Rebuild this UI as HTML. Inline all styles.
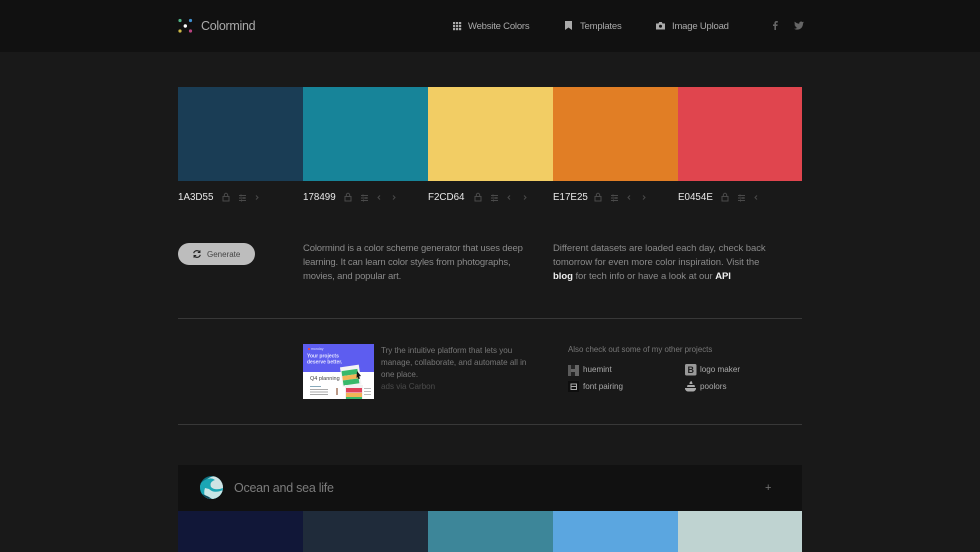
<!DOCTYPE html>
<html><head><meta charset="utf-8"><style>
html,body{margin:0;padding:0;background:#191919;width:980px;height:552px;overflow:hidden}
body{position:relative;font-family:"Liberation Sans",sans-serif;color:#8c8c8c}
.a{position:absolute;white-space:nowrap}
.s{position:absolute}
.t{font-size:9.500px;line-height:14px;color:#8a8a8a;letter-spacing:-.16px}
.n{font-size:9.500px;line-height:14px;color:#aaa;letter-spacing:-.2px}
.h{font-size:9.800px;line-height:14px;color:#fff;top:191px;opacity:.9}
.p{font-size:8.050px;line-height:12.400px;color:#777}
.l{font-size:8.100px;line-height:12px;color:#aaa}
svg{position:absolute;overflow:visible}
b{color:#eee;font-weight:700}
</style></head><body>
<div class="s" style="left:0;top:0;width:980px;height:52px;background:#111"></div>

<svg style="left:178px;top:18px" width="15" height="16">
<circle cx="7.300" cy="8" r="1.700" fill="#fff"/><circle cx="2" cy="2.500" r="1.600" fill="#4fb286"/><circle cx="12.500" cy="2.500" r="1.600" fill="#3f8fd0"/><circle cx="2" cy="13" r="1.600" fill="#cdb845"/><circle cx="12.500" cy="13" r="1.600" fill="#b8427f"/></svg>
<div class="a" style="left:201px;top:18px;font-size:12.500px;line-height:16px;color:#aaa;letter-spacing:-.3px">Colormind</div>

<svg style="left:453px;top:22px" width="8" height="8" fill="#aaa"><rect width="2.200" height="2.200"/><rect x="3" width="2.200" height="2.200"/><rect x="6" width="2.200" height="2.200"/><rect y="3" width="2.200" height="2.200"/><rect x="3" y="3" width="2.200" height="2.200"/><rect x="6" y="3" width="2.200" height="2.200"/><rect y="6" width="2.200" height="2.200"/><rect x="3" y="6" width="2.200" height="2.200"/><rect x="6" y="6" width="2.200" height="2.200"/></svg>
<div class="a n" style="left:468px;top:20px">Website Colors</div>
<svg style="left:565px;top:21px" width="7" height="9" fill="#aaa"><path d="M0 0H7V9L3.500 6.500L0 9Z"/></svg>
<div class="a n" style="left:580px;top:20px">Templates</div>
<svg style="left:656px;top:22px" width="9" height="8"><path d="M0 1.500H2.500L3.200 0H5.800L6.500 1.500H9V7.500H0Z" fill="#aaa"/><circle cx="4.500" cy="4.300" r="1.500" fill="#111"/></svg>
<div class="a n" style="left:672px;top:20px">Image Upload</div>
<svg style="left:773px;top:21px" width="5" height="9" fill="#666"><path d="M1.400 9V5H0V3.400H1.400V2.200C1.400.8 2.200 0 3.500 0H4.800V1.600H3.900C3.200 1.600 3 1.900 3 2.500V3.400H4.700L4.400 5H3V9Z"/></svg>
<svg style="left:794px;top:21px" width="10" height="9" fill="#666"><path d="M10 1.200L8.900 1.600L9.700.6L8.500 1.100C7.400 0 5.200.6 5.100 2.700C3.400 2.600 2 1.900 .8.600C.2 1.700.5 2.800 1.400 3.500L.5 3.200C.5 4.300 1.200 5 2.200 5.300L1.300 5.300C1.600 6.200 2.300 6.700 3.300 6.800C2.300 7.500 1.200 7.800 0 7.700C3.600 9.900 8.900 8.200 9 2.500Z"/></svg>

<div class="s" style="left:178px;top:87px;width:125px;height:94px;background:#1a3d55"></div>
<div class="s" style="left:303px;top:87px;width:125px;height:94px;background:#178499"></div>
<div class="s" style="left:428px;top:87px;width:125px;height:94px;background:#f2cd64"></div>
<div class="s" style="left:553px;top:87px;width:125px;height:94px;background:#e17e25"></div>
<div class="s" style="left:678px;top:87px;width:124px;height:94px;background:#e0454e"></div>

<div class="a h" style="left:178px">1A3D55</div>
<div class="a h" style="left:303px">178499</div>
<div class="a h" style="left:428px">F2CD64</div>
<div class="a h" style="left:553px">E17E25</div>
<div class="a h" style="left:678px">E0454E</div>

<svg style="left:0;top:0" width="980" height="552" fill="none" stroke="#4a4a4a" stroke-width="1">
<defs>
<g id="k"><rect x="0" y="3.500" width="6" height="4.500"/><path d="M1.300 3.500V2A1.700 1.700 0 0 1 4.700 2V3.500"/></g>
<g id="m"><path d="M0 1.500H7M0 4H7M0 6.500H7M2 .5V2.500M5 3V5M2.500 5.500V7.500"/></g>
<path id="r" d="M0 0L2 2L0 4"/>
<path id="q" d="M2 0L0 2L2 4"/>
</defs>
<use href="#k" x="223" y="193"/><use href="#m" x="239" y="194"/><use href="#r" x="256" y="195.500"/>
<use href="#k" x="345" y="193"/><use href="#m" x="361" y="194"/><use href="#q" x="378" y="195.500"/><use href="#r" x="393" y="195.500"/>
<use href="#k" x="475" y="193"/><use href="#m" x="491" y="194"/><use href="#q" x="508" y="195.500"/><use href="#r" x="524" y="195.500"/>
<use href="#k" x="595" y="193"/><use href="#m" x="611" y="194"/><use href="#q" x="628" y="195.500"/><use href="#r" x="643" y="195.500"/>
<use href="#k" x="722" y="193"/><use href="#m" x="738" y="194"/><use href="#q" x="755" y="195.500"/>
</svg>

<div class="s" style="left:178px;top:243px;width:77px;height:22px;border-radius:11px;background:#bdbdbd"></div>
<svg style="left:193px;top:250px" width="8" height="8" fill="none" stroke="#222" stroke-width="1.100"><path d="M.7 3.200A3.400 3.400 0 0 1 6.700 2M7.300 4.800A3.400 3.400 0 0 1 1.300 6"/><path d="M7 .3V2.500H4.800M1 7.700V5.500H3.200" stroke-width=".9"/></svg>
<div class="a" style="left:207px;top:249px;font-size:8px;line-height:12px;color:#444">Generate</div>

<div class="a t" style="left:303px;top:242px">Colormind is a color scheme generator that uses deep<br>learning. It can learn color styles from photographs,<br>movies, and popular art.</div>
<div class="a t" style="left:553px;top:242px;letter-spacing:-.05px">Different datasets are loaded each day, check back<br>tomorrow for even more color inspiration. Visit the<br><b>blog</b> for tech info or have a look at our <b>API</b></div>

<div class="s" style="left:178px;top:318px;width:624px;height:1px;background:#383838"></div>
<div class="s" style="left:178px;top:424px;width:624px;height:1px;background:#383838"></div>

<svg style="left:303px;top:344px" width="71" height="55">
<rect width="71" height="55" fill="#5d5df0"/>
<rect y="28" width="71" height="27" fill="#fff"/>
<rect x="5" y="4" width="2" height="2" fill="#e5484d"/>
<text x="8" y="6" font-family="Liberation Sans" font-size="3.500" fill="#dcdcff">monday</text>
<text x="4" y="13.500" font-family="Liberation Sans" font-weight="700" font-size="5" fill="#e4e4ff">Your projects</text>
<text x="4" y="19.500" font-family="Liberation Sans" font-weight="700" font-size="5" fill="#e4e4ff">deserve better.</text>
<text x="7" y="36" font-family="Liberation Sans" font-size="5.500" fill="#444">Q4 planning</text>
<rect x="7" y="42" width="11" height="1" fill="#8ab"/><rect x="7" y="45" width="18" height="1" fill="#aaa"/><rect x="7" y="47.500" width="18" height="1" fill="#aaa"/><rect x="7" y="50" width="18" height="1" fill="#aaa"/>
<rect x="33" y="44" width="2" height="7" fill="#b98"/>
<g transform="rotate(-8 47 30)"><rect x="38" y="22" width="19" height="20" fill="#f4f4f4"/><rect x="39" y="26" width="16" height="5" fill="#39b96b"/><rect x="39" y="31" width="16" height="4.500" fill="#f2b457"/><rect x="39" y="35.500" width="16" height="5" fill="#39b96b"/></g>
<path d="M54 27l4 5-2 .5 1 2-1.500.5-1-2-1 1z" fill="#111"/>
<rect x="42" y="41" width="18" height="14" fill="#f2f2f2"/><rect x="43" y="44" width="16" height="4.500" fill="#e0405a"/><rect x="43" y="49" width="16" height="4" fill="#f2b457"/><rect x="43" y="53" width="16" height="2" fill="#39b96b"/>
<rect x="61" y="44" width="7" height="1" fill="#bbb"/><rect x="61" y="47" width="7" height="1" fill="#bbb"/><rect x="61" y="50" width="7" height="1" fill="#bbb"/>
</svg>

<div class="a p" style="left:381px;top:344.500px">Try the intuitive platform that lets you<br>manage, collaborate, and automate all in<br>one place.<br><span style="color:#4c4c4c;position:relative;top:-1px">ads via Carbon</span></div>

<div class="a p" style="left:568px;top:344px;font-size:7.900px;color:#777">Also check out some of my other projects</div>

<svg style="left:568px;top:365px" width="12" height="11"><rect width="11" height="11" fill="#3d3d3d"/><rect x="0" width="3" height="11" fill="#5a5a5a"/><rect x="7" width="4" height="11" fill="#666"/><rect x="3" y="4" width="4" height="3" fill="#666"/><rect x="3" width="4" height="4" fill="#252525"/><rect x="3" y="7" width="4" height="4" fill="#252525"/></svg>
<div class="a l" style="left:583px;top:364px">huemint</div>
<svg style="left:568px;top:381px" width="11" height="11"><rect width="11" height="11" fill="#0e0e0e"/><path d="M3 3H8.500V8.500H3Z" fill="none" stroke="#aaa" stroke-width="1"/><path d="M3 5.500H8" stroke="#aaa" stroke-width="1"/></svg>
<div class="a l" style="left:583px;top:381px">font pairing</div>
<svg style="left:685px;top:364px" width="12" height="12"><rect width="11.500" height="11.500" rx="1.500" fill="#999"/><text x="5.700" y="9" font-family="Liberation Sans" font-weight="700" font-size="9" fill="#222" text-anchor="middle">B</text></svg>
<div class="a l" style="left:700px;top:364px">logo maker</div>
<svg style="left:685px;top:381px" width="12" height="11" fill="#aaa"><path d="M4.500 2Q5.500 0 6.500 0Q7.500 2 7.500 3H4.500Z"/><path d="M2.500 4H9.500L10 6H2Z"/><path d="M0 7H11V8Q10 10.500 8 10.500H3Q1 10.500 0 8Z"/></svg>
<div class="a l" style="left:700px;top:381px">poolors</div>

<div class="s" style="left:178px;top:465px;width:624px;height:46px;background:#111"></div>
<svg style="left:200px;top:476px" width="23" height="23">
<defs><clipPath id="c"><circle cx="11.500" cy="11.500" r="11.500"/></clipPath></defs>
<g clip-path="url(#c)"><rect width="23" height="23" fill="#0e6f7e"/><path d="M0 10Q8 0 16 0H23V23H12Q4 20 0 10Z" fill="#cfe3e4"/><path d="M2 6Q10 0 15 4Q9 6 11 11Q15 15 23 12V23H0V8Z" fill="#1aa6b4"/><path d="M9 13Q14 18 23 14V23H6Q3 17 5 12Z" fill="#c8e6e6"/><path d="M2 18Q8 20 12 23H0Z" fill="#0b4a5c"/></g></svg>
<div class="a" style="left:234px;top:480px;font-size:12.500px;line-height:16px;color:#7c7c7c;letter-spacing:-.25px">Ocean and sea life</div>
<div class="a" style="left:765px;top:482px;font-size:11px;line-height:12px;color:#777">+</div>

<div class="s" style="left:178px;top:511px;width:125px;height:41px;background:#111738"></div>
<div class="s" style="left:303px;top:511px;width:125px;height:41px;background:#1f2b3a"></div>
<div class="s" style="left:428px;top:511px;width:125px;height:41px;background:#3d8699"></div>
<div class="s" style="left:553px;top:511px;width:125px;height:41px;background:#5ba6e0"></div>
<div class="s" style="left:678px;top:511px;width:124px;height:41px;background:#bfd3d1"></div>
</body></html>
